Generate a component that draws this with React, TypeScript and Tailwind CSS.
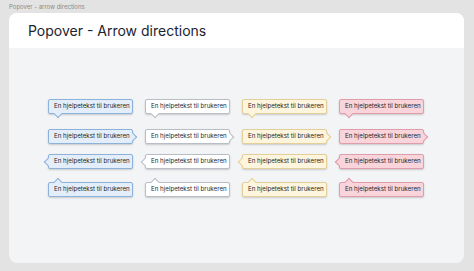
import React from "react";

type Dir = "bottom" | "right" | "left" | "top";

const themes = [
  { box: "bg-[#e4eefa] border-[#8cb2da]", arrow: "bg-[#e4eefa] border-[#8cb2da]" },
  { box: "bg-white border-[#b9bdc5]", arrow: "bg-white border-[#b9bdc5]" },
  { box: "bg-[#fdf5dd] border-[#e4cf98]", arrow: "bg-[#fdf5dd] border-[#e4cf98]" },
  { box: "bg-[#fad4db] border-[#df9cab]", arrow: "bg-[#fad4db] border-[#df9cab]" },
];

const arrowPos: Record<Dir, string> = {
  bottom: "left-[6px] bottom-[-4px] border-r border-b",
  right: "right-[-4px] top-[4px] border-t border-r",
  left: "left-[-4px] top-[4px] border-b border-l",
  top: "left-[6px] top-[-4px] border-t border-l",
};

const rows: { dir: Dir; mt: string }[] = [
  { dir: "bottom", mt: "mt-0" },
  { dir: "right", mt: "mt-[15px]" },
  { dir: "left", mt: "mt-[10px]" },
  { dir: "top", mt: "mt-[13px]" },
];

function Tip({ dir, theme }: { dir: Dir; theme: (typeof themes)[number] }) {
  return (
    <div
      className={`relative h-[15px] w-[85px] rounded-[2px] border ${theme.box} shadow-[0_1px_2px_rgba(0,0,0,0.18)] flex items-center pl-[5px]`}
    >
      <span
        className={`absolute w-[6px] h-[6px] rotate-45 ${theme.arrow} ${arrowPos[dir]}`}
      />
      <span className="relative text-[6.2px] leading-none text-[#1f1f1f] whitespace-nowrap">
        En hjelpetekst til brukeren
      </span>
    </div>
  );
}

export default function App() {
  return (
    <div
      className="w-[474px] h-[271px] bg-[#e3e3e3] relative overflow-hidden"
      style={{ fontFamily: "Inter, 'Noto Sans', sans-serif" }}
    >
      <div className="h-[13px] pl-[9px] pt-[4px] text-[6px] leading-none text-[#8a8a8a]">
        Popover - arrow directions
      </div>
      <div className="ml-[9px] w-[455px] h-[250px] rounded-[8px] overflow-hidden bg-[#f3f4f6] flex flex-col">
        <div className="h-[35px] bg-white pl-[19px] pt-[9px]">
          <h1 className="text-[14px] leading-[18px] text-[#1c2330] font-normal">
            Popover - Arrow directions
          </h1>
        </div>
        <div className="pt-[51px] pl-[39px] flex gap-[12px]">
          {themes.map((t, ci) => (
            <div key={ci} className="flex flex-col">
              {rows.map((r, ri) => (
                <div key={ri} className={r.mt}>
                  <Tip dir={r.dir} theme={t} />
                </div>
              ))}
            </div>
          ))}
        </div>
      </div>
    </div>
  );
}
